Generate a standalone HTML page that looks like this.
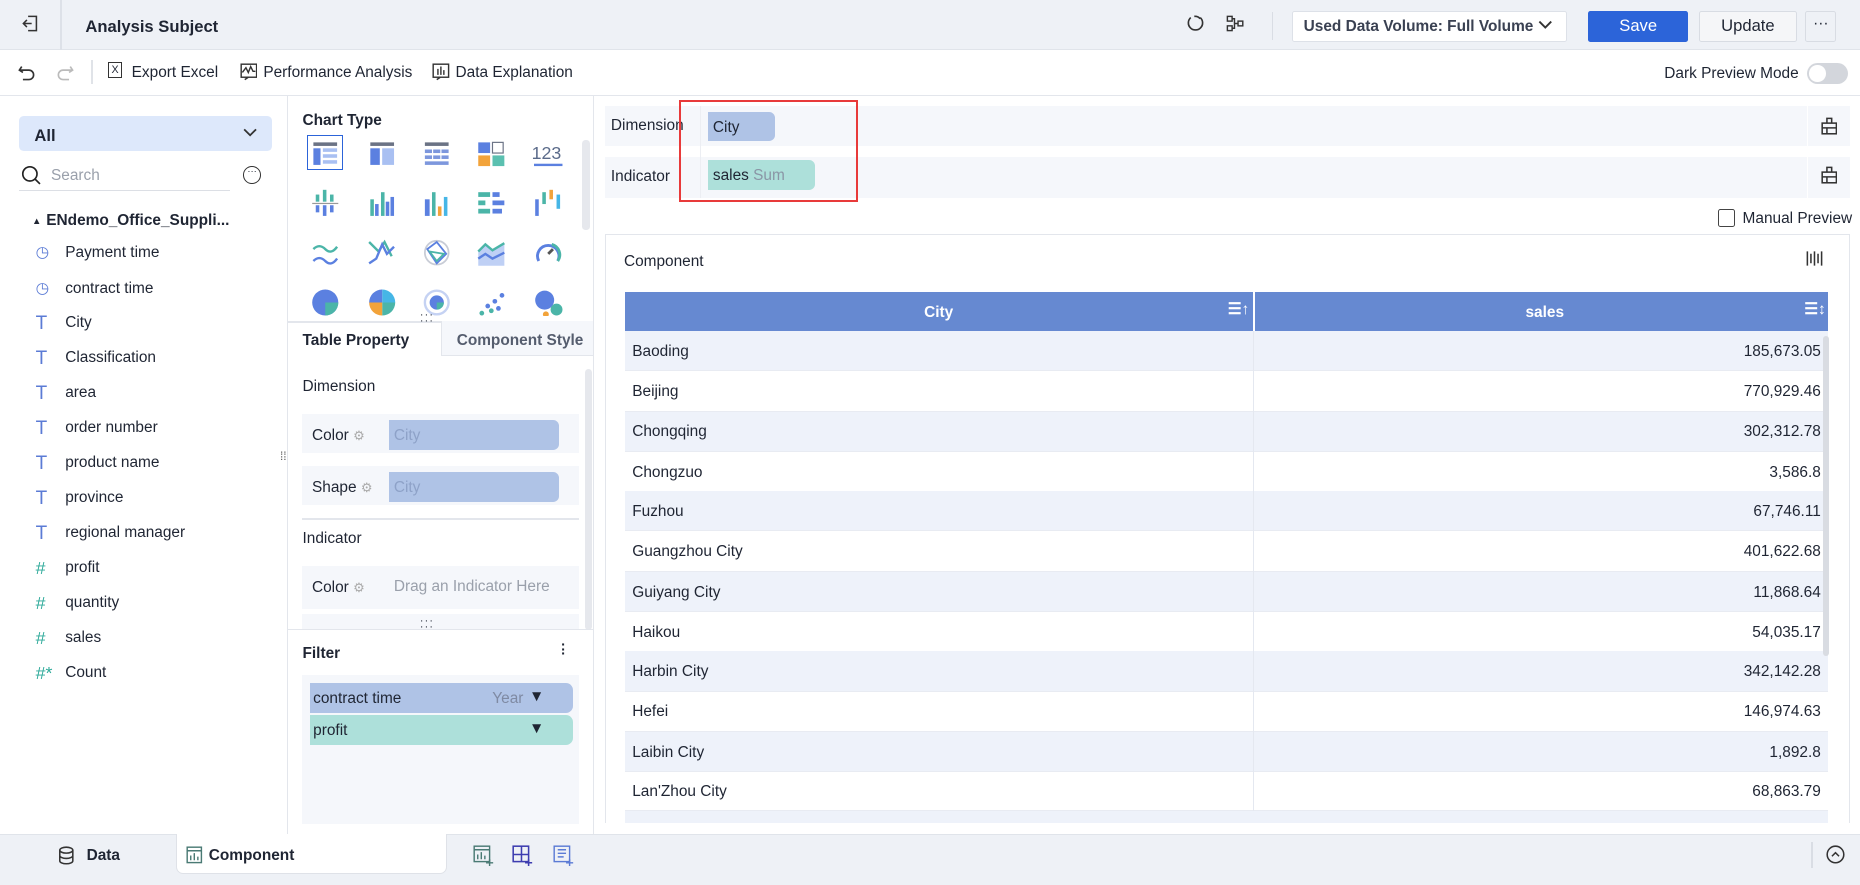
<!DOCTYPE html>
<html><head><meta charset="utf-8"><style>
html{zoom:1.18622}
*{box-sizing:border-box;margin:0;padding:0}
body{width:1568px;height:746px;overflow:hidden;font-family:"Liberation Sans",sans-serif;font-size:13px;color:#1f2533;background:#fff;position:relative}
.a{position:absolute}
.b{font-weight:bold}
svg{display:block}
.li{position:absolute;left:30px;font-size:13px;color:#1f2533}
.li i{position:absolute;left:0;top:-1px;width:16px;font-style:normal;color:#5b7bd5}
.li span{position:absolute;left:25px;white-space:nowrap}
.row{position:absolute;left:527px;width:1014px;height:34px;border-bottom:1px solid #e8ebf2}
.row .c{position:absolute;left:6px;top:10px}
.row .v{position:absolute;right:6px;top:10px}
.row .d{position:absolute;left:529px;top:0;height:34px;border-left:1px solid #e4e8f0}
</style></head><body>
<!-- top bar -->
<div class="a" style="left:0;top:0;width:1568px;height:42px;background:#eef1f6;border-bottom:1px solid #e0e4ea"></div>
<div class="a" style="left:51px;top:0;width:1px;height:42px;background:#dde1e8"></div>
<svg class="a" style="left:18px;top:12px" width="16" height="16" viewBox="0 0 16 16" fill="none" stroke="#333" stroke-width="1.3"><path d="M6 2h7v12H6M9 8H2M5 5L2 8l3 3"/></svg>
<div class="a b" style="left:72px;top:14px;font-size:14px">Analysis Subject</div>
<svg class="a" style="left:1000px;top:12px" width="16" height="16" viewBox="0 0 16 16" fill="none" stroke="#333" stroke-width="1.4"><path d="M4 3a6 6 0 1 0 8 0"/><path d="M7 2a6 6 0 0 1 5 2"/></svg>
<svg class="a" style="left:1033px;top:12px" width="16" height="16" viewBox="0 0 16 16" fill="none" stroke="#333" stroke-width="1.2"><rect x="2" y="2" width="4" height="4"/><rect x="2" y="10" width="4" height="4"/><rect x="11" y="6" width="4" height="4"/><path d="M6 4h2v8H6M8 8h3"/></svg>
<div class="a" style="left:1072px;top:10px;width:1px;height:24px;background:#d9dde4"></div>
<div class="a" style="left:1089px;top:9px;width:232px;height:26px;background:#fff;border:1px solid #dde1e8;border-radius:2px"></div>
<div class="a b" style="left:1099px;top:15px;color:#3a4152">Used Data Volume: Full Volume</div>
<svg class="a" style="left:1296px;top:15px" width="14" height="12" viewBox="0 0 14 12" fill="none" stroke="#333" stroke-width="1.6"><path d="M2 3l5 5 5-5"/></svg>
<div class="a" style="left:1339px;top:9px;width:84px;height:26px;background:#2c64d9;border-radius:2px;color:#fff;text-align:center;line-height:26px;font-size:14px">Save</div>
<div class="a" style="left:1432px;top:9px;width:83px;height:26px;background:#f5f6f8;border:1px solid #d8dce3;border-radius:2px;text-align:center;line-height:24px;font-size:14px">Update</div>
<div class="a" style="left:1522px;top:9px;width:26px;height:26px;border:1px solid #d8dce3;border-radius:2px;text-align:center;line-height:20px;font-size:13px">···</div>
<!-- toolbar -->
<div class="a" style="left:0;top:80px;width:1568px;height:1px;background:#e3e6ec"></div>
<svg class="a" style="left:14px;top:53px" width="16" height="16" viewBox="0 0 16 16" fill="none" stroke="#333" stroke-width="1.4"><path d="M4 3L2 6l3 2M2 6h8a4 4 0 0 1 0 8H5"/></svg>
<svg class="a" style="left:47px;top:53px" width="16" height="16" viewBox="0 0 16 16" fill="none" stroke="#bbb" stroke-width="1.4"><path d="M12 3l2 3-3 2M14 6H6a4 4 0 0 0 0 8h5"/></svg>
<div class="a" style="left:77px;top:51px;width:1px;height:20px;background:#e0e3e8"></div>
<div class="a" style="left:91px;top:52px;border:1px solid #333;width:12px;height:14px;font-size:9px;text-align:center;line-height:12px">X</div>
<div class="a" style="left:111px;top:54px">Export Excel</div>
<svg class="a" style="left:202px;top:53px" width="15" height="15" viewBox="0 0 15 15" fill="none" stroke="#333" stroke-width="1.2"><rect x="1" y="1" width="13" height="11"/><path d="M2 8l3-4 2 4 2-5 2 4h2M4 14l3-2"/></svg>
<div class="a" style="left:222px;top:54px">Performance Analysis</div>
<svg class="a" style="left:364px;top:53px" width="15" height="15" viewBox="0 0 15 15" fill="none" stroke="#333" stroke-width="1.2"><rect x="1" y="1" width="13" height="11"/><path d="M5 10V5M7.5 10V3M10 10V6M4 14l3-2"/></svg>
<div class="a" style="left:384px;top:54px">Data Explanation</div>
<div class="a" style="left:1403px;top:55px">Dark Preview Mode</div>
<div class="a" style="left:1523px;top:53px;width:35px;height:18px;border-radius:9px;background:#d3d6dc"></div>
<div class="a" style="left:1525px;top:55px;width:14px;height:14px;border-radius:7px;background:#fff"></div>
<!-- left panel -->
<div class="a" style="left:242px;top:81px;width:1px;height:622px;background:#e3e6ec"></div>
<div class="a" style="left:16px;top:98px;width:213px;height:29px;background:#dde8fb;border-radius:4px"></div>
<div class="a b" style="left:29px;top:106px;font-size:14px">All</div>
<svg class="a" style="left:205px;top:107px" width="12" height="10" viewBox="0 0 12 10" fill="none" stroke="#333" stroke-width="1.5"><path d="M1 2l5 5 5-5"/></svg>
<svg class="a" style="left:18px;top:139px" width="17" height="17" viewBox="0 0 17 17" fill="none" stroke="#222" stroke-width="1.4"><circle cx="7.5" cy="7.5" r="6"/><path d="M12 12l4 4"/></svg>
<div class="a" style="left:43px;top:141px;color:#9aa0ab">Search</div>
<div class="a" style="left:16px;top:160px;width:178px;height:1px;background:#dcdfe5"></div>
<div class="a" style="left:205px;top:140px;width:15px;height:15px;border:1.3px solid #333;border-radius:50%;font-size:8px;text-align:center;line-height:9px">···</div>
<div class="a" style="left:27px;top:182px;font-size:8px">▲</div>
<div class="a b" style="left:39px;top:179px">ENdemo_Office_Suppli...</div>
<div class="li" style="top:206px"><i>◷</i><span>Payment time</span></div>
<div class="li" style="top:236px"><i>◷</i><span>contract time</span></div>
<div class="li" style="top:265px"><i style="font-size:16px">T</i><span>City</span></div>
<div class="li" style="top:294px"><i style="font-size:16px">T</i><span>Classification</span></div>
<div class="li" style="top:324px"><i style="font-size:16px">T</i><span>area</span></div>
<div class="li" style="top:353px"><i style="font-size:16px">T</i><span>order number</span></div>
<div class="li" style="top:383px"><i style="font-size:16px">T</i><span>product name</span></div>
<div class="li" style="top:412px"><i style="font-size:16px">T</i><span>province</span></div>
<div class="li" style="top:442px"><i style="font-size:16px">T</i><span>regional manager</span></div>
<div class="li" style="top:471px"><i style="color:#2eaa9a;font-size:15px">#</i><span>profit</span></div>
<div class="li" style="top:501px"><i style="color:#2eaa9a;font-size:15px">#</i><span>quantity</span></div>
<div class="li" style="top:530px"><i style="color:#2eaa9a;font-size:15px">#</i><span>sales</span></div>
<div class="li" style="top:560px"><i style="color:#2eaa9a;font-size:15px">#*</i><span>Count</span></div>
<div class="a" style="left:236px;top:383px;font-size:10px;line-height:5px;color:#555">⁞⁞</div>
<!-- middle panel -->
<div class="a" style="left:500px;top:81px;width:1px;height:622px;background:#e3e6ec"></div>
<div class="a b" style="left:255px;top:94px">Chart Type</div>
<div class="a" style="left:491px;top:118px;width:6px;height:76px;border-radius:3px;background:#e6e8ed"></div>
<div class="a" style="left:259px;top:114px;width:30px;height:29px;border:1.5px solid #2c64d9"></div>
<svg class="a" style="left:262px;top:118px" width="230" height="148" viewBox="0 0 230 148">
<g fill="#5b80e0"><rect x="2" y="2" width="20" height="3" fill="#6b7385"/><rect x="2" y="7" width="6" height="14"/><rect x="10" y="7" width="12" height="3" fill="#a9c0f2"/><rect x="10" y="12" width="12" height="3" fill="#a9c0f2"/><rect x="10" y="17" width="12" height="3" fill="#a9c0f2"/></g>
<g transform="translate(48,0)"><rect x="2" y="2" width="20" height="3" fill="#6b7385"/><rect x="2" y="7" width="8" height="14" fill="#5b80e0"/><rect x="12" y="7" width="10" height="14" fill="#a9c0f2"/></g>
<g transform="translate(94,0)" fill="#7d97dd"><rect x="2" y="2" width="20" height="3" fill="#6b7385"/><rect x="2" y="8" width="6" height="3"/><rect x="9" y="8" width="6" height="3"/><rect x="16" y="8" width="6" height="3"/><rect x="2" y="13" width="6" height="3"/><rect x="9" y="13" width="6" height="3"/><rect x="16" y="13" width="6" height="3"/><rect x="2" y="18" width="20" height="3"/></g>
<g transform="translate(141,0)"><rect x="0" y="2" width="10" height="9" fill="#5b80e0"/><rect x="12" y="2" width="9" height="9" fill="none" stroke="#6b7385"/><rect x="0" y="13" width="10" height="9" fill="#f2a33a"/><rect x="12" y="13" width="10" height="9" fill="#5bc0b0"/></g>
<text x="186" y="16" font-family="Liberation Sans" font-size="15" fill="#5b6b8a">123</text><rect x="188" y="20" width="24" height="2" fill="#5b80e0"/>
<g transform="translate(0,42)" fill="#5b80e0"><rect x="4" y="4" width="3" height="6" fill="#4bb5a8"/><rect x="10" y="0" width="3" height="10" fill="#4bb5a8"/><rect x="16" y="4" width="3" height="6" fill="#4bb5a8"/><rect x="1" y="11" width="22" height="1" fill="#999"/><rect x="4" y="13" width="3" height="6"/><rect x="10" y="13" width="3" height="9"/><rect x="16" y="13" width="3" height="6"/></g>
<g transform="translate(48,42)"><rect x="2" y="8" width="3" height="14" fill="#4bb5a8"/><rect x="6" y="12" width="3" height="10" fill="#5b80e0"/><rect x="11" y="2" width="3" height="20" fill="#4bb5a8"/><rect x="15" y="10" width="3" height="12" fill="#5b80e0"/><rect x="19" y="6" width="3" height="16" fill="#5b80e0"/></g>
<g transform="translate(94,42)"><rect x="2" y="8" width="4" height="14" fill="#5b80e0"/><rect x="8" y="2" width="3" height="20" fill="#4bb5a8"/><rect x="13" y="14" width="3" height="8" fill="#f2a33a"/><rect x="18" y="6" width="3" height="16" fill="#46b6e6"/></g>
<g transform="translate(141,42)"><rect x="0" y="2" width="10" height="4" fill="#4bb5a8"/><rect x="12" y="2" width="6" height="4" fill="#5b80e0"/><rect x="0" y="9" width="6" height="4" fill="#4bb5a8"/><rect x="12" y="9" width="10" height="4" fill="#5b80e0"/><rect x="0" y="16" width="10" height="4" fill="#4bb5a8"/><rect x="12" y="16" width="8" height="4" fill="#5b80e0"/></g>
<g transform="translate(188,42)"><rect x="1" y="8" width="3" height="14" fill="#5b80e0"/><rect x="7" y="2" width="3" height="10" fill="#4bb5a8"/><rect x="13" y="0" width="3" height="8" fill="#f2a33a"/><rect x="19" y="4" width="3" height="12" fill="#46b6e6"/></g>
<g transform="translate(0,84)" fill="none" stroke-width="2"><path d="M2 8q5-5 10 0t10-2" stroke="#4bb5a8"/><path d="M2 18q5-5 10 0t10-2" stroke="#5b80e0"/></g>
<g transform="translate(48,84)" fill="none" stroke-width="2"><path d="M1 2l8 8 5-8 6 12" stroke="#4bb5a8"/><path d="M1 20l6-4 5-12 4 8 6-6" stroke="#5b80e0"/></g>
<g transform="translate(94,84)" fill="none" stroke-width="1.5"><circle cx="12" cy="11" r="10" stroke="#c8ccd6"/><path d="M4 8l8-6 8 10-8 8z" stroke="#5b80e0"/><path d="M6 10l12 2-6 6z" stroke="#4bb5a8"/></g>
<g transform="translate(141,84)"><path d="M0 10l6-6 6 5 10-6v19H0z" fill="#bfd0f5"/><path d="M0 10l6-6 6 5 10-6" stroke="#4bb5a8" stroke-width="2" fill="none"/><path d="M0 16l6-4 6 4 10-5" stroke="#5b80e0" stroke-width="2" fill="none"/></g>
<g transform="translate(188,84)" fill="none" stroke-width="2.4"><path d="M4 18a9 9 0 1 1 16 0" stroke="#5b80e0"/><path d="M15 4a9 9 0 0 1 5 14" stroke="#4bb5a8"/><path d="M12 12l4-4" stroke="#555"/></g>
<g transform="translate(0,126)"><circle cx="12" cy="11" r="11" fill="#5b80e0"/><path d="M12 11h11a11 11 0 0 1-11 11z" fill="#4bb5a8"/></g>
<g transform="translate(48,126)"><path d="M12 11V0a11 11 0 0 1 11 11z" fill="#46b6e6"/><path d="M12 11h11a11 11 0 0 1-11 11z" fill="#4bb5a8"/><path d="M12 11v11a11 11 0 0 1-11-11z" fill="#f2a33a"/><path d="M12 11H1a11 11 0 0 1 11-11z" fill="#5b80e0"/></g>
<g transform="translate(94,126)"><circle cx="12" cy="11" r="10" fill="none" stroke="#c5d2f3" stroke-width="2"/><circle cx="12" cy="11" r="6" fill="#5b80e0"/><path d="M12 11h6a6 6 0 0 1-6 6z" fill="#4bb5a8"/></g>
<g transform="translate(141,126)" fill="#5b80e0"><circle cx="3" cy="20" r="2" fill="#4bb5a8"/><circle cx="8" cy="14" r="2"/><circle cx="14" cy="10" r="2"/><circle cx="20" cy="5" r="2"/><circle cx="11" cy="18" r="2" fill="#4bb5a8"/><circle cx="17" cy="16" r="2"/></g>
<g transform="translate(188,126)"><circle cx="9" cy="9" r="8" fill="#5b80e0"/><circle cx="19" cy="17" r="5" fill="#4bb5a8"/><circle cx="10" cy="21" r="2.5" fill="#f2a33a"/></g>
</svg>
<div class="a" style="left:243px;top:271px;width:257px;height:1px;background:#e3e6ec"></div>
<div class="a" style="left:354px;top:264px;font-size:9px;line-height:5px;letter-spacing:1px">···<br>···</div>
<div class="a" style="left:372px;top:271px;width:128px;height:29px;background:#f5f7fb;border-left:1px solid #e3e6ec;border-bottom:1px solid #e3e6ec"></div>
<div class="a b" style="left:255px;top:280px">Table Property</div>
<div class="a b" style="left:385px;top:280px;color:#555d6e">Component Style</div>
<div class="a" style="left:493px;top:311px;width:6px;height:220px;border-radius:3px;background:#e6e8ed"></div>
<div class="a" style="left:255px;top:319px">Dimension</div>
<div class="a" style="left:255px;top:349px;width:233px;height:33px;background:#f5f7fb"></div>
<div class="a" style="left:263px;top:360px">Color <span style="color:#aaa;font-size:11px">⚙</span></div>
<div class="a" style="left:328px;top:354px;width:143px;height:25px;background:#afc3e6;border-radius:0 5px 5px 0;color:#8ea2c8;padding:6px 4px">City</div>
<div class="a" style="left:255px;top:393px;width:233px;height:33px;background:#f5f7fb"></div>
<div class="a" style="left:263px;top:404px">Shape <span style="color:#aaa;font-size:11px">⚙</span></div>
<div class="a" style="left:328px;top:398px;width:143px;height:25px;background:#afc3e6;border-radius:0 5px 5px 0;color:#8ea2c8;padding:6px 4px">City</div>
<div class="a" style="left:255px;top:437px;width:233px;height:1px;background:#e3e6ec"></div>
<div class="a" style="left:255px;top:447px">Indicator</div>
<div class="a" style="left:255px;top:477px;width:233px;height:36px;background:#f5f7fb"></div>
<div class="a" style="left:263px;top:488px">Color <span style="color:#aaa;font-size:11px">⚙</span></div>
<div class="a" style="left:332px;top:487px;color:#9aa0ab">Drag an Indicator Here</div>
<div class="a" style="left:255px;top:518px;width:233px;height:12px;background:#f5f7fb"></div>
<div class="a" style="left:243px;top:530px;width:257px;height:1px;background:#e3e6ec"></div>
<div class="a" style="left:354px;top:522px;font-size:9px;line-height:5px;letter-spacing:1px">···<br>···</div>
<div class="a b" style="left:255px;top:544px">Filter</div>
<div class="a b" style="left:473px;top:542px;font-size:12px;line-height:4px">·<br>·<br>·</div>
<div class="a" style="left:255px;top:569px;width:233px;height:126px;background:#f5f7fb"></div>
<div class="a" style="left:261px;top:576px;width:222px;height:25px;background:#afc3e6;border-radius:0 6px 6px 0"></div>
<div class="a" style="left:264px;top:582px">contract time</div>
<div class="a" style="left:415px;top:582px;color:#7f8aa3">Year</div>
<div class="a b" style="left:446px;top:580px;font-size:13px">▼</div>
<div class="a" style="left:261px;top:603px;width:222px;height:25px;background:#ade0da;border-radius:0 6px 6px 0"></div>
<div class="a" style="left:264px;top:609px">profit</div>
<div class="a b" style="left:446px;top:607px;font-size:13px">▼</div>
<!-- right area -->
<div class="a" style="left:510px;top:89px;width:1050px;height:34px;background:#f5f7fb"></div>
<div class="a" style="left:510px;top:132px;width:1050px;height:35px;background:#f5f7fb"></div>
<div class="a" style="left:1523px;top:89px;width:1px;height:78px;background:#fff"></div>
<div class="a" style="left:590px;top:89px;width:1px;height:78px;background:#eceef3"></div>
<div class="a" style="left:515px;top:99px">Dimension</div>
<div class="a" style="left:515px;top:142px">Indicator</div>
<div class="a" style="left:597px;top:94px;width:56px;height:25px;background:#afc3e6;border-radius:0 5px 5px 0;padding:6px 4px">City</div>
<div class="a" style="left:597px;top:135px;width:90px;height:25px;background:#ade0da;border-radius:0 5px 5px 0;padding:6px 4px">sales <span style="color:#8a95a5">Sum</span></div>
<div class="a" style="left:572px;top:84px;width:151px;height:86px;border:2px solid #e83a3a"></div>
<svg class="a" style="left:1535px;top:98px" width="14" height="16" viewBox="0 0 14 16" fill="none" stroke="#333" stroke-width="1.3"><rect x="1" y="6" width="12" height="9"/><path d="M5 6V2h4v4M1 10h12M5 10v5"/></svg>
<svg class="a" style="left:1535px;top:139px" width="14" height="16" viewBox="0 0 14 16" fill="none" stroke="#333" stroke-width="1.3"><rect x="1" y="6" width="12" height="9"/><path d="M5 6V2h4v4M1 10h12M5 10v5"/></svg>
<div class="a" style="left:1448px;top:176px;width:15px;height:15px;border:1.3px solid #444;border-radius:2px"></div>
<div class="a" style="left:1469px;top:177px">Manual Preview</div>
<div class="a" style="left:510px;top:197px;width:1050px;height:497px;border:1px solid #e3e6ec;border-bottom:none"></div>
<div class="a" style="left:526px;top:213px">Component</div>
<svg class="a" style="left:1522px;top:210px" width="16" height="16" viewBox="0 0 16 16" stroke="#333" stroke-width="1.3"><path d="M2 2v12M5 4v8M8 2v12M11 4v8M14 2v12"/></svg>
<div class="a" style="left:527px;top:246px;width:1014px;height:33px;background:#6689d1"></div>
<div class="a" style="left:1056px;top:246px;width:2px;height:33px;background:#fff"></div>
<div class="a b" style="left:779px;top:256px;color:#fff">City</div>
<div class="a b" style="left:1286px;top:256px;color:#fff">sales</div>
<div class="a b" style="left:1035px;top:253px;color:#fff;font-size:13px">☰↑</div>
<div class="a b" style="left:1521px;top:253px;color:#fff;font-size:13px">☰↕</div>
<div class="row" style="top:279px;background:#eef2fa"><div class="c">Baoding</div><div class="d"></div><div class="v">185,673.05</div></div>
<div class="row" style="top:313px"><div class="c">Beijing</div><div class="d"></div><div class="v">770,929.46</div></div>
<div class="row" style="top:347px;background:#eef2fa"><div class="c">Chongqing</div><div class="d"></div><div class="v">302,312.78</div></div>
<div class="row" style="top:381px"><div class="c">Chongzuo</div><div class="d"></div><div class="v">3,586.8</div></div>
<div class="row" style="top:414px;background:#eef2fa"><div class="c">Fuzhou</div><div class="d"></div><div class="v">67,746.11</div></div>
<div class="row" style="top:448px"><div class="c">Guangzhou City</div><div class="d"></div><div class="v">401,622.68</div></div>
<div class="row" style="top:482px;background:#eef2fa"><div class="c">Guiyang City</div><div class="d"></div><div class="v">11,868.64</div></div>
<div class="row" style="top:516px"><div class="c">Haikou</div><div class="d"></div><div class="v">54,035.17</div></div>
<div class="row" style="top:549px;background:#eef2fa"><div class="c">Harbin City</div><div class="d"></div><div class="v">342,142.28</div></div>
<div class="row" style="top:583px"><div class="c">Hefei</div><div class="d"></div><div class="v">146,974.63</div></div>
<div class="row" style="top:617px;background:#eef2fa"><div class="c">Laibin City</div><div class="d"></div><div class="v">1,892.8</div></div>
<div class="row" style="top:650px"><div class="c">Lan'Zhou City</div><div class="d"></div><div class="v">68,863.79</div></div>
<div class="row" style="top:684px;height:10px;background:#eef2fa;border:none"></div>
<div class="a" style="left:1537px;top:283px;width:5px;height:270px;background:#d9dce2;border-radius:3px"></div>
<!-- bottom bar -->
<div class="a" style="left:0;top:703px;width:1568px;height:43px;background:#eef1f6;border-top:1px solid #e0e4ea"></div>
<div class="a" style="left:148px;top:703px;width:229px;height:34px;background:#fff;border:1px solid #dfe2e8;border-top:none;border-radius:0 0 6px 6px"></div>
<svg class="a" style="left:49px;top:713px" width="14" height="16" viewBox="0 0 14 16" fill="none" stroke="#333" stroke-width="1.3"><ellipse cx="7" cy="3.5" rx="5.5" ry="2.5"/><path d="M1.5 3.5v9c0 1.4 2.5 2.5 5.5 2.5s5.5-1.1 5.5-2.5v-9M1.5 8c0 1.4 2.5 2.5 5.5 2.5s5.5-1.1 5.5-2.5"/></svg>
<div class="a b" style="left:73px;top:714px">Data</div>
<svg class="a" style="left:157px;top:713px" width="14" height="15" viewBox="0 0 14 15" fill="none" stroke="#4a7a74" stroke-width="1.2"><rect x="1" y="1" width="12" height="13"/><path d="M1 4h12M4 12V8M7 12V6M10 12V9"/></svg>
<div class="a b" style="left:176px;top:714px">Component</div>
<svg class="a" style="left:399px;top:712px" width="18" height="18" viewBox="0 0 18 18" fill="none" stroke="#4a7a74" stroke-width="1.2"><rect x="1" y="1" width="13" height="13"/><path d="M1 4h13M4 12V8M7 12V6M10 12V9M14 12v6M11 15h6"/></svg>
<svg class="a" style="left:432px;top:712px" width="18" height="18" viewBox="0 0 18 18" fill="none" stroke="#3d3db0" stroke-width="1.3"><rect x="1" y="1" width="13" height="13"/><path d="M1 8h13M8 1v13M14 12v6M11 15h6"/></svg>
<svg class="a" style="left:466px;top:712px" width="18" height="18" viewBox="0 0 18 18" fill="none" stroke="#5b7bd5" stroke-width="1.2"><rect x="1" y="1" width="13" height="13"/><path d="M4 4h7M4 7h7M4 10h5M14 12v6M11 15h6"/></svg>
<div class="a" style="left:1527px;top:710px;width:1px;height:22px;background:#d9dde4"></div>
<svg class="a" style="left:1539px;top:712px" width="16" height="16" viewBox="0 0 16 16" fill="none" stroke="#333" stroke-width="1.3"><circle cx="8" cy="8" r="7"/><path d="M5 9.5l3-3 3 3"/></svg>
</body></html>
